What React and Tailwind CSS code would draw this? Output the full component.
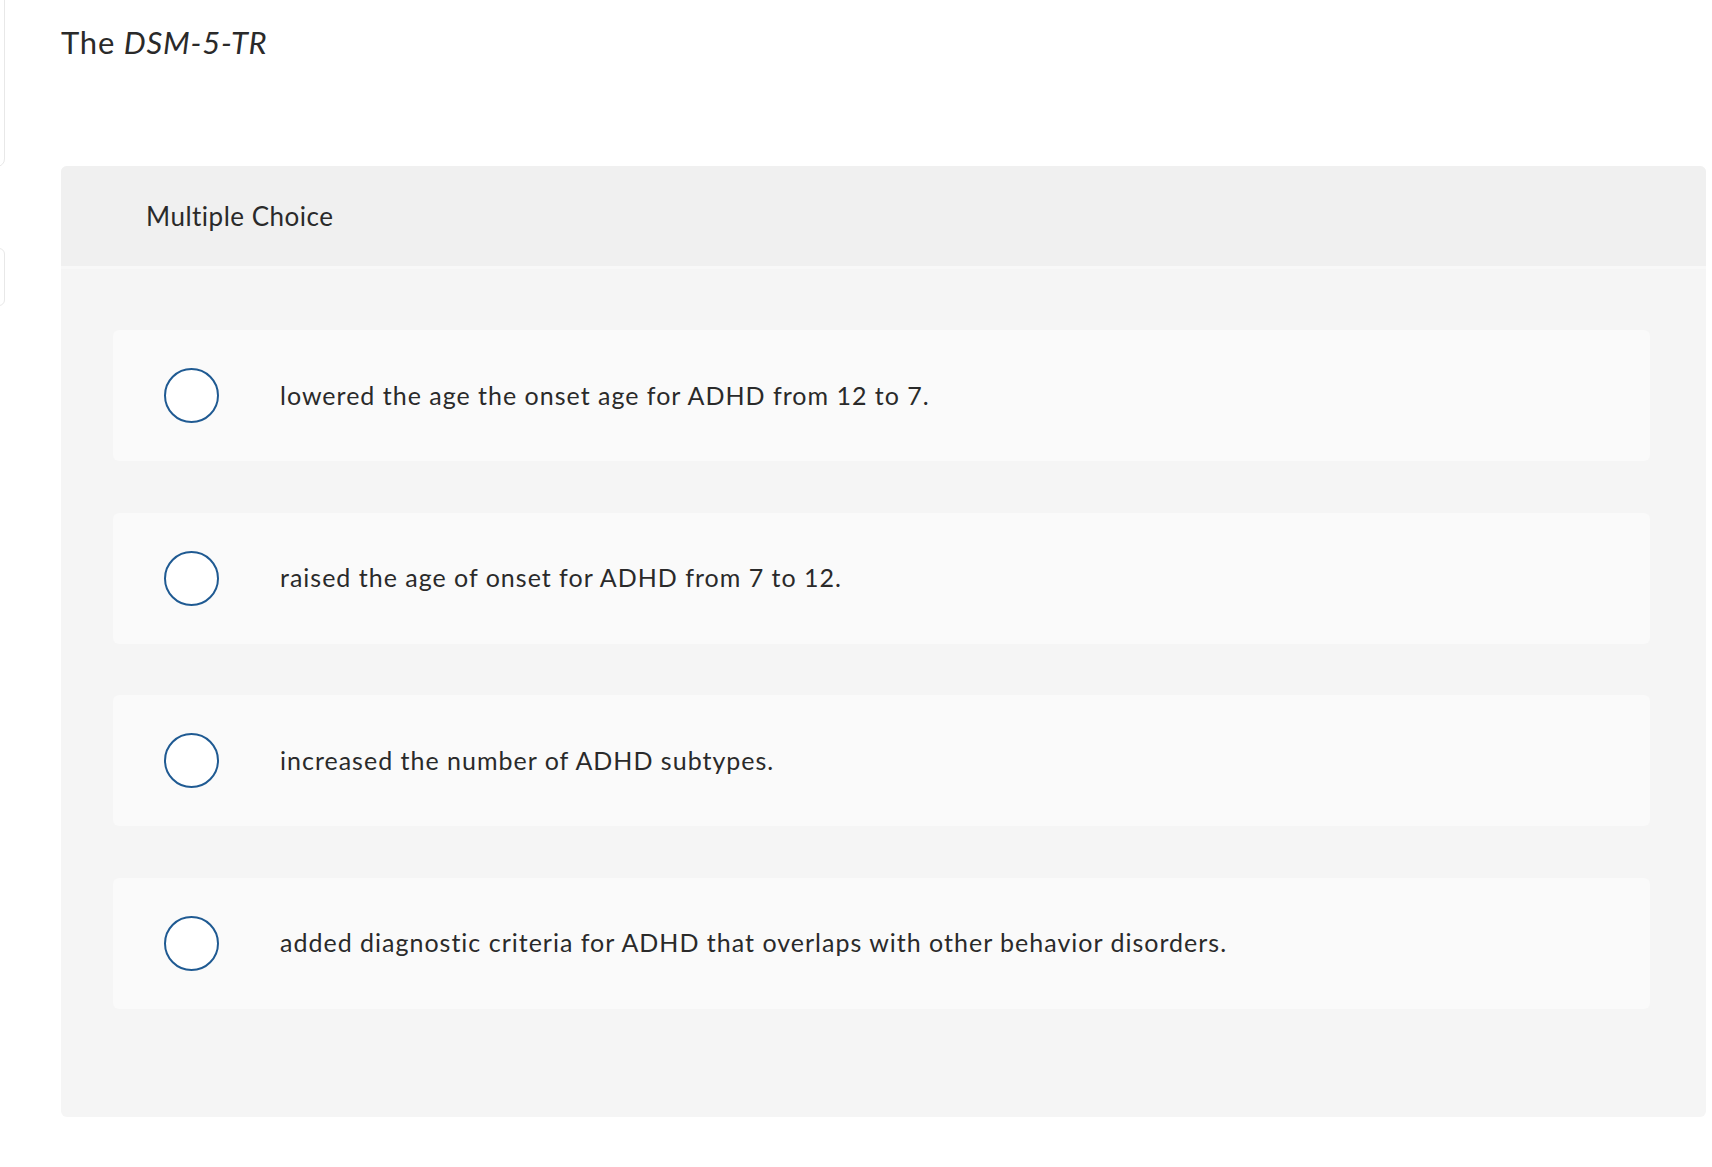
import React from "react";

const options = [
  "lowered the age the onset age for ADHD from 12 to 7.",
  "raised the age of onset for ADHD from 7 to 12.",
  "increased the number of ADHD subtypes.",
  "added diagnostic criteria for ADHD that overlaps with other behavior disorders.",
];

export default function App() {
  return (
    <div className="relative min-h-screen w-[1712px] bg-white text-[#2a2a2a] font-['Lato',sans-serif]">
      {/* edges of cut-off sidebar cards */}
      <div className="absolute left-[-20px] top-[-10px] h-[177px] w-[25px] rounded-br-[8px] border border-[#e8e8e8]" />
      <div className="absolute left-[-20px] top-[248px] h-[58px] w-[25px] rounded-r-[6px] border border-[#e8e8e8]" />

      <div className="pl-[61px] pr-[6px] pt-[24px]">
        <h1 className="text-[31px] leading-[36px] font-normal tracking-[0.8px]">
          The <em className="italic">DSM-5-TR</em>
        </h1>

        <div className="mt-[106px] rounded-[6px] bg-[#f5f5f5] overflow-hidden">
          <div className="flex h-[100px] items-center bg-[#f0f0f0] pl-[85px] text-[26px] tracking-[0.5px]">
            Multiple Choice
          </div>
          <div className="h-[3px] bg-[#f8f8f8]" />

          <div className="flex flex-col gap-[51.5px] pl-[52px] pr-[56px] pt-[61px] pb-[108px]">
            {options.map((text) => (
              <label
                key={text}
                className="flex h-[131px] cursor-pointer items-center rounded-[6px] bg-[#fafafa] pl-[51px]"
              >
                <span className="h-[55px] w-[55px] shrink-0 rounded-full border-2 border-[#1f5a92] bg-white" />
                <span className="ml-[61px] text-[25px] tracking-[1px]">{text}</span>
              </label>
            ))}
          </div>
        </div>
      </div>
    </div>
  );
}
